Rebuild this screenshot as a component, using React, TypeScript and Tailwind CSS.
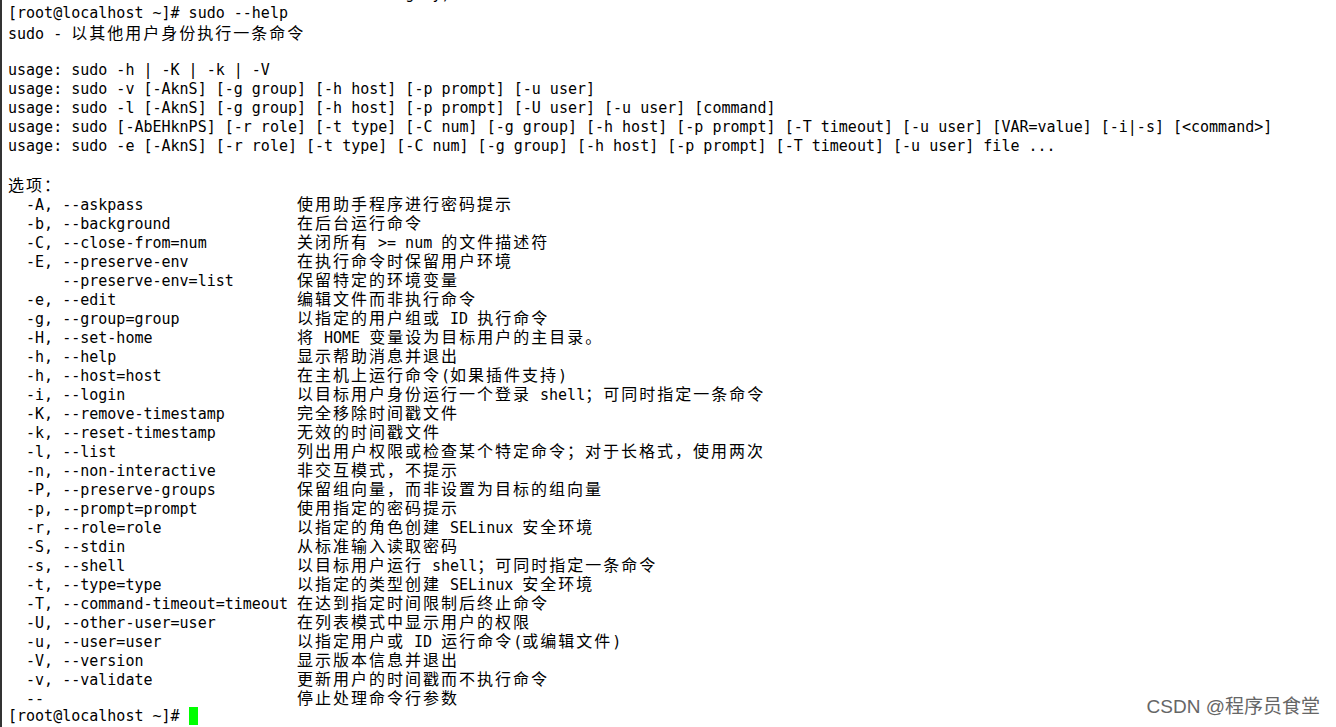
import React from "react";

const usage = [
  "usage: sudo -h | -K | -k | -V",
  "usage: sudo -v [-AknS] [-g group] [-h host] [-p prompt] [-u user]",
  "usage: sudo -l [-AknS] [-g group] [-h host] [-p prompt] [-U user] [-u user] [command]",
  "usage: sudo [-AbEHknPS] [-r role] [-t type] [-C num] [-g group] [-h host] [-p prompt] [-T timeout] [-u user] [VAR=value] [-i|-s] [<command>]",
  "usage: sudo -e [-AknS] [-r role] [-t type] [-C num] [-g group] [-h host] [-p prompt] [-T timeout] [-u user] file ...",
];

const options: [string, string][] = [
  ["-A, --askpass", "使用助手程序进行密码提示"],
  ["-b, --background", "在后台运行命令"],
  ["-C, --close-from=num", "关闭所有 >= num 的文件描述符"],
  ["-E, --preserve-env", "在执行命令时保留用户环境"],
  ["    --preserve-env=list", "保留特定的环境变量"],
  ["-e, --edit", "编辑文件而非执行命令"],
  ["-g, --group=group", "以指定的用户组或 ID 执行命令"],
  ["-H, --set-home", "将 HOME 变量设为目标用户的主目录。"],
  ["-h, --help", "显示帮助消息并退出"],
  ["-h, --host=host", "在主机上运行命令(如果插件支持)"],
  ["-i, --login", "以目标用户身份运行一个登录 shell；可同时指定一条命令"],
  ["-K, --remove-timestamp", "完全移除时间戳文件"],
  ["-k, --reset-timestamp", "无效的时间戳文件"],
  ["-l, --list", "列出用户权限或检查某个特定命令；对于长格式，使用两次"],
  ["-n, --non-interactive", "非交互模式，不提示"],
  ["-P, --preserve-groups", "保留组向量，而非设置为目标的组向量"],
  ["-p, --prompt=prompt", "使用指定的密码提示"],
  ["-r, --role=role", "以指定的角色创建 SELinux 安全环境"],
  ["-S, --stdin", "从标准输入读取密码"],
  ["-s, --shell", "以目标用户运行 shell；可同时指定一条命令"],
  ["-t, --type=type", "以指定的类型创建 SELinux 安全环境"],
  ["-T, --command-timeout=timeout", "在达到指定时间限制后终止命令"],
  ["-U, --other-user=user", "在列表模式中显示用户的权限"],
  ["-u, --user=user", "以指定用户或 ID 运行命令(或编辑文件)"],
  ["-V, --version", "显示版本信息并退出"],
  ["-v, --validate", "更新用户的时间戳而不执行命令"],
  ["--", "停止处理命令行参数"],
];

// CJK runs take two terminal cells (18px)
const Text = ({ s }: { s: string }) => {
  const parts = s.split(/([\u3000-\u303f\u4e00-\u9fff\uff00-\uffef]+)/);
  return (
    <>
      {parts.map((p, i) =>
        i % 2 === 1 ? (
          <span
            key={i}
            className="inline-block h-[19px] leading-[19px] font-['Noto_Sans_CJK_SC',sans-serif] text-[16px] tracking-[2px]"
          >
            {p}
          </span>
        ) : (
          <span key={i}>{p}</span>
        )
      )}
    </>
  );
};

const Line = ({ s = "", children }: { s?: string; children?: React.ReactNode }) => (
  <div className="h-[19px] leading-[19px] whitespace-pre">
    <Text s={s} />
    {children}
  </div>
);

export default function App() {
  return (
    <div className="relative h-[727px] w-[1336px] overflow-hidden bg-white text-black border-l-2 border-[#333] pl-[6px] pt-[4px] font-['DejaVu_Sans_Mono',monospace] text-[15px]">
      {/* tail of previous output, cut off by the top edge */}
      <div className="-mt-[19px]">
        <Line s={"                                            g  y)"} />
      </div>
      <Line s="[root@localhost ~]# sudo --help" />
      <Line s="sudo - 以其他用户身份执行一条命令" />
      <Line />
      {usage.map((u) => (
        <Line key={u} s={u} />
      ))}
      <Line />
      <Line s="选项：" />
      {options.map(([o, d]) => (
        <Line key={o + d} s={("  " + o).padEnd(32) + d} />
      ))}
      <Line s="[root@localhost ~]# ">
        <span className="inline-block h-[18px] w-[9px] bg-[#00ff00] align-[-4px]" />
      </Line>

      <div className="absolute right-[16px] bottom-[6px] font-['Liberation_Sans','Noto_Sans_CJK_SC',sans-serif] text-[19px] text-[#666]">
        CSDN @程序员食堂
      </div>
    </div>
  );
}
